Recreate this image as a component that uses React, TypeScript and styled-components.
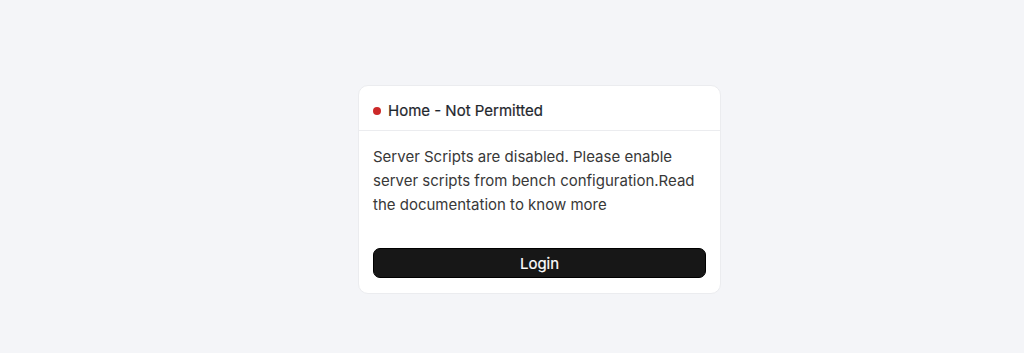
import React from 'react'
import styled, { createGlobalStyle } from 'styled-components'

const GlobalStyle = createGlobalStyle`
  html, body {
    margin: 0;
    padding: 0;
    background: #f4f5f8;
    font-family: Inter, "Noto Sans", sans-serif;
  }
`

const Page = styled.div`
  width: 1024px;
  height: 353px;
  display: flex;
  justify-content: center;
  padding: 85px 0 0 55px;
  box-sizing: border-box;
`

const Card = styled.div`
  width: 363px;
  height: 209px;
  box-sizing: border-box;
  background: #ffffff;
  border: 1px solid #ebecef;
  border-radius: 10px;
  display: flex;
  flex-direction: column;
`

const Header = styled.div`
  height: 45px;
  box-sizing: border-box;
  display: flex;
  align-items: center;
  gap: 7px;
  padding: 5px 14px 0 14px;
  border-bottom: 1px solid #ebecef;
`

const Dot = styled.span`
  width: 8px;
  height: 8px;
  border-radius: 50%;
  background: #cc2929;
`

const Title = styled.div`
  font-size: 15px;
  font-weight: 400;
  color: #1f272e;
  -webkit-text-stroke: 0.2px #1f272e;
`

const Body = styled.div`
  flex: 1;
  display: flex;
  flex-direction: column;
  padding: 14px 14px 15px 14px;
`

const Message = styled.p`
  margin: 0;
  font-size: 15px;
  line-height: 24px;
  color: #383838;
`

const Button = styled.button`
  margin-top: auto;
  height: 30px;
  width: 100%;
  border: 1px solid #000;
  border-radius: 7px;
  background: #171717;
  color: #ffffff;
  font-family: Inter, "Noto Sans", sans-serif;
  font-size: 15px;
  font-weight: 400;
  -webkit-text-stroke: 0.2px #ffffff;
  cursor: pointer;
`

export default function App() {
  return (
    <>
      <GlobalStyle />
      <Page>
        <Card>
          <Header>
            <Dot />
            <Title>Home - Not Permitted</Title>
          </Header>
          <Body>
            <Message>
              Server Scripts are disabled. Please enable server scripts from bench configuration.Read the
              documentation to know more
            </Message>
            <Button>Login</Button>
          </Body>
        </Card>
      </Page>
    </>
  )
}
